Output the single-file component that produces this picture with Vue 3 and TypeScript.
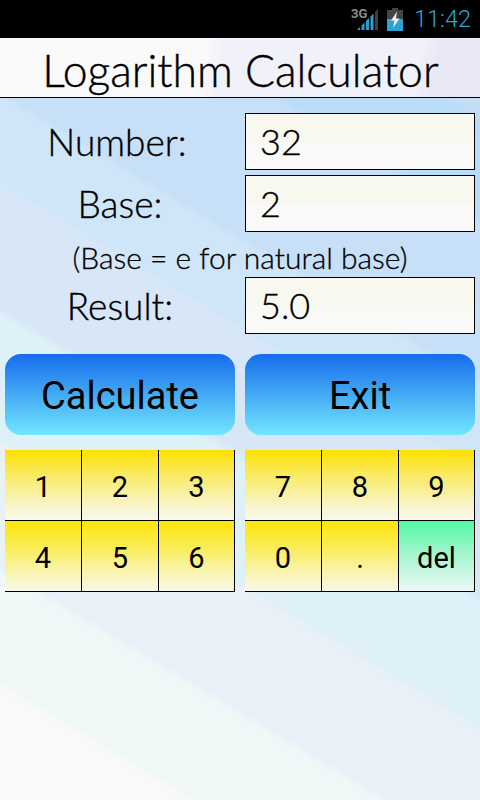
<script setup lang="ts">
const pads: { keys: string[] }[] = [
  { keys: ['1', '2', '3', '4', '5', '6'] },
  { keys: ['7', '8', '9', '0', '.', 'del'] },
]
</script>

<template>
  <div class="screen">
    <div class="status">
      <div class="net">
        <span class="g3">3G</span>
        <svg class="bars" width="21" height="21" viewBox="0 0 21 21">
          <path d="M0 21l3-3v3z" fill="#2c9fd0" />
          <path d="M4.500 21v-4.500l3-3V21z" fill="#2c9fd0" />
          <path d="M9 21v-9l3-3v12z" fill="#2c9fd0" />
          <path d="M13.500 21V7.500l3-3V21z" fill="#2c9fd0" />
          <path d="M18 21V3l3-3v21z" fill="#3f3f3f" />
        </svg>
      </div>
      <svg class="batt" width="16" height="23" viewBox="0 0 16 23">
        <path d="M5 0h6v2h5v21H0V2h5z" fill="#444" />
        <path d="M0 11h16v12H0z" fill="#2ea3d2" />
        <path d="M10 3.500L4 12.500h3.500L6 20l6.500-9.500H9z" fill="#f0f0f0" />
      </svg>
      <span class="clock">11:42</span>
    </div>
    <header class="title">Logarithm Calculator</header>
    <main class="body">
      <div class="row">
        <span class="label">Number:</span>
        <div class="field">32</div>
      </div>
      <div class="row">
        <span class="label">Base:</span>
        <div class="field">2</div>
      </div>
      <p class="hint">(Base = e for natural base)</p>
      <div class="row">
        <span class="label">Result:</span>
        <div class="field">5.0</div>
      </div>
      <div class="actions">
        <button class="action">Calculate</button>
        <button class="action">Exit</button>
      </div>
      <div class="pads">
        <div v-for="(pad, i) in pads" :key="i" class="pad">
          <button
            v-for="k in pad.keys"
            :key="k"
            class="key"
            :class="{ del: k === 'del' }"
          >{{ k }}</button>
        </div>
      </div>
    </main>
  </div>
</template>

<style scoped>
.screen {
  width: 480px;
  height: 800px;
  display: flex;
  flex-direction: column;
  overflow: hidden;
  font-family: "Lato", "Noto Sans", sans-serif;
  font-weight: 300;
  color: #000;
  background: linear-gradient(211deg,
    #c5dcf5 0 97px,
    #b9ddf6 105px 185px,
    #c7dff7 193px 324px,
    #cfe6f8 332px 400px,
    #d7e7f8 408px 510px,
    #def0f8 518px 620px,
    #e9f0f8 628px 731px,
    #eff8f7 739px 830px,
    #f9f9f9 838px);
}
.status {
  height: 38px;
  flex: none;
  background: #000;
  display: flex;
  align-items: center;
  justify-content: flex-end;
  padding-right: 9px;
}
.net {
  position: relative;
  width: 27px;
  height: 22px;
  margin-right: 9px;
}
.g3 {
  position: absolute;
  left: 0;
  top: -1px;
  font: 700 13px/13px "Roboto", sans-serif;
  color: #8a8a8a;
}
.bars {
  position: absolute;
  right: 0;
  bottom: 0;
}
.batt { margin-right: 11px; }
.clock {
  font: 300 23.500px "Roboto", sans-serif;
  color: #2ba7d8;
}
.title {
  height: 60px;
  flex: none;
  box-sizing: border-box;
  border-bottom: 1px solid #000;
  background: linear-gradient(100deg, #fafafa 0 42%, #f1f1f9 46% 86%, #e9e9f6 90%);
  font-size: 44.500px;
  line-height: 63px;
  text-align: center;
  padding-left: 1px;
  -webkit-text-stroke: 0.4px #000;
}
.body {
  padding: 15px 5px 0;
  display: flex;
  flex-direction: column;
}
.row {
  display: grid;
  grid-template-columns: 230px 230px;
  column-gap: 10px;
  align-items: center;
  margin-bottom: 5px;
}
.label {
  font-size: 37px;
  line-height: 53px;
  text-align: center;
  -webkit-text-stroke: 0.35px #000;
}
.row:first-child .label {
  padding-right: 6px;
}
.field {
  height: 57px;
  box-sizing: border-box;
  border: 1px solid #000;
  background: linear-gradient(#f8f8ee 50%, #f9f9f7 50%);
  font-size: 36px;
  line-height: 55px;
  padding-left: 14px;
  -webkit-text-stroke: 0.35px #000;
}
.hint {
  margin: 0;
  height: 40px;
  font-size: 30px;
  line-height: 40px;
  text-align: center;
  -webkit-text-stroke: 0.3px #000;
}
.actions {
  display: grid;
  grid-template-columns: 230px 230px;
  column-gap: 10px;
  margin-top: 15px;
}
.action {
  height: 81px;
  border: 0;
  border-radius: 16px;
  padding: 2px 0 0;
  background: linear-gradient(#166ceb, #72e6fe);
  font: 400 38px "Roboto", sans-serif;
  color: #000;
}
.pads {
  display: grid;
  grid-template-columns: 230px 230px;
  column-gap: 10px;
  margin-top: 15px;
}
.pad {
  display: grid;
  grid-template-columns: 77px 77px 76px;
  grid-auto-rows: 71px;
  height: 142px;
}
.key {
  border: 0;
  border-right: 1px solid #000;
  border-bottom: 1px solid #000;
  padding: 3px 0 0;
  background: linear-gradient(#fde000, #f9ea60 35%, #f8f2b0 68%, #f8f8f0);
  font: 400 29px "Roboto", sans-serif;
  color: #000;
}
.key:nth-child(n + 4) {
  background: linear-gradient(#fde60a, #f9ec50 35%, #f8f4a8 70%, #f8f8e8);
}
.key.del,
.key.del:nth-child(n + 4) {
  background: linear-gradient(#52f8a6, #a8f5d0 50%, #eaf8f8);
}
</style>
